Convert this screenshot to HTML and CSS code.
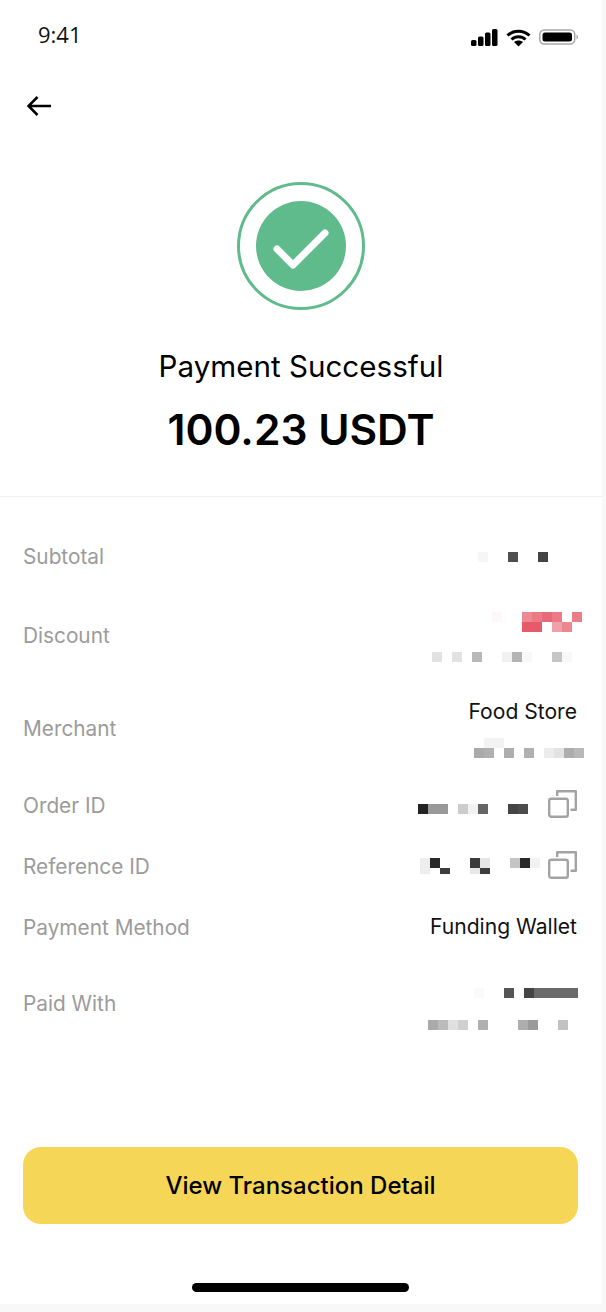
FILE: index.html
```html
<!DOCTYPE html>
<html lang="en">
<head>
  <meta charset="UTF-8">
  <title>Payment Successful</title>
  <meta name="viewport" content="width=device-width, initial-scale=1.0">
  <link rel="stylesheet" href="styles.css">
</head>
<body>
  <div class="screen">
    <div class="status-bar">
      <span class="clock">9:41</span>
      <div class="status-icons">
        <svg width="27" height="17" viewBox="0 0 27 17"><rect x="0" y="11" width="5.500" height="6" rx="1.500"/><rect x="7" y="7.500" width="5.500" height="9.500" rx="1.500"/><rect x="14" y="3.500" width="5.500" height="13.500" rx="1.500"/><rect x="21" y="0" width="5.500" height="17" rx="1.500"/></svg>
        <svg width="25" height="18" viewBox="0 0 25 18"><path d="M1.500 6.500C7.500 .8 17.500 .8 23.500 6.500M5.500 10.500c4-3.700 10-3.700 14 0" fill="none" stroke="#000" stroke-width="3"/><path d="M12.500 17.500l-4.500-4.500c2.700-2 6.300-2 9 0z"/></svg>
        <svg width="39" height="16" viewBox="0 0 39 16"><rect x="0.750" y="1" width="35" height="14" rx="4.500" fill="none" stroke="#a8a8a8" stroke-width="1.500"/><rect x="3.500" y="3.500" width="29.500" height="9" rx="2.500"/><path d="M37.500 5.500c1 .5 1.500 1.500 1.500 2.500s-.5 2-1.500 2.500z" fill="#a8a8a8"/></svg>
      </div>
    </div>

    <div class="nav">
      <svg width="26" height="22" viewBox="0 0 26 22"><path d="M25 11H2.500M11.500 2L2.500 11l9 9" fill="none" stroke="#000" stroke-width="2.500"/></svg>
    </div>

    <div class="result">
      <div class="result-ring">
        <div class="result-disc">
          <svg width="60" height="52" viewBox="0 0 60 52"><path d="M6 29l16 16L54 13" fill="none" stroke="#fff" stroke-width="7" stroke-linecap="round" stroke-linejoin="round"/></svg>
        </div>
      </div>
      <h1 class="result-title">Payment Successful</h1>
      <p class="result-amount">100.23 USDT</p>
    </div>

    <div class="details">
      <div class="row row-subtotal">
        <span class="label">Subtotal</span>
        <div class="value value-single">
          <svg class="mosaic" width="106" height="10" viewBox="478 552 106 10"><rect x="478" y="552" width="10" height="10" fill="#f6f6f6"/><rect x="508" y="552" width="10" height="10" fill="#4f4f4f"/><rect x="538" y="552" width="10" height="10" fill="#444"/></svg>
        </div>
      </div>

      <div class="row row-discount">
        <span class="label">Discount</span>
        <div class="value">
          <svg class="mosaic" width="92" height="20" viewBox="492 612 92 20"><rect x="492" y="612" width="10" height="10" fill="#fdf7f8"/><rect x="522" y="612" width="10" height="10" fill="#ec8a94"/><rect x="532" y="612" width="10" height="10" fill="#ea7b86"/><rect x="542" y="612" width="10" height="10" fill="#e76a7a"/><rect x="552" y="612" width="10" height="10" fill="#eb7a85"/><rect x="572" y="612" width="10" height="10" fill="#ea7d88"/><rect x="522" y="622" width="20" height="10" fill="#e65a69"/><rect x="552" y="622" width="10" height="10" fill="#f0a0aa"/><rect x="562" y="622" width="10" height="10" fill="#ec8790"/></svg>
          <svg class="mosaic" width="152" height="10" viewBox="432 652 152 10"><rect x="432" y="652" width="10" height="10" fill="#e2e2e2"/><rect x="452" y="652" width="10" height="10" fill="#e2e2e2"/><rect x="472" y="652" width="10" height="10" fill="#b8b8b8"/><rect x="502" y="652" width="10" height="10" fill="#f1f1f1"/><rect x="512" y="652" width="10" height="10" fill="#b4b4b4"/><rect x="522" y="652" width="10" height="10" fill="#f8f8f8"/><rect x="552" y="652" width="10" height="10" fill="#c6c6c6"/><rect x="562" y="652" width="10" height="10" fill="#f8f8f8"/></svg>
        </div>
      </div>

      <div class="row row-merchant">
        <span class="label">Merchant</span>
        <div class="value value-tight">
          <span class="text">Food Store</span>
          <svg class="mosaic" width="110" height="20" viewBox="474 738 110 20"><rect x="484" y="738" width="20" height="10" fill="#f3f3f3"/><rect x="474" y="748" width="10" height="10" fill="#aaa"/><rect x="484" y="748" width="10" height="10" fill="#b0b0b0"/><rect x="504" y="748" width="10" height="10" fill="#aeaeae"/><rect x="524" y="748" width="10" height="10" fill="#b0b0b0"/><rect x="544" y="748" width="10" height="10" fill="#ececec"/><rect x="554" y="748" width="10" height="10" fill="#e2e2e2"/><rect x="564" y="748" width="10" height="10" fill="#adadad"/><rect x="574" y="748" width="10" height="10" fill="#b8b8b8"/></svg>
        </div>
      </div>

      <div class="row row-order">
        <span class="label">Order ID</span>
        <div class="value-inline">
          <svg class="id-order" width="110" height="10" viewBox="418 804 110 10"><rect x="418" y="804" width="10" height="10" fill="#222"/><rect x="428" y="804" width="20" height="10" fill="#999"/><rect x="458" y="804" width="10" height="10" fill="#ccc"/><rect x="468" y="804" width="10" height="10" fill="#f2f2f2"/><rect x="478" y="804" width="10" height="10" fill="#666"/><rect x="508" y="804" width="10" height="10" fill="#444"/><rect x="518" y="804" width="10" height="10" fill="#4c4c4c"/></svg>
          <svg class="copy" width="29" height="28" viewBox="0 0 29 28"><rect x="1.200" y="8.700" width="18.600" height="18.100" rx="2" fill="none" stroke="#a3a3a3" stroke-width="2.400"/><path d="M9.200 6V1.200H27.800V19.800H22.500" fill="none" stroke="#a3a3a3" stroke-width="2.400" stroke-linejoin="round"/></svg>
        </div>
      </div>

      <div class="row row-reference">
        <span class="label">Reference ID</span>
        <div class="value-inline value-inline-tight">
          <svg width="120" height="16" viewBox="420 858 120 16"><rect x="420" y="858" width="10" height="16" fill="#eee"/><rect x="430" y="858" width="10" height="10" fill="#2a2a2a"/><rect x="440" y="868" width="10" height="6" fill="#3c3c3c"/><rect x="470" y="858" width="10" height="10" fill="#3c3c3c"/><rect x="480" y="858" width="10" height="10" fill="#e6e6e6"/><rect x="470" y="868" width="10" height="6" fill="#e8e8e8"/><rect x="480" y="868" width="10" height="6" fill="#3c3c3c"/><rect x="510" y="858" width="10" height="10" fill="#c4c4c4"/><rect x="520" y="858" width="10" height="10" fill="#2a2a2a"/><rect x="530" y="858" width="10" height="10" fill="#f2f2f2"/></svg>
          <svg class="copy" width="29" height="28" viewBox="0 0 29 28"><rect x="1.200" y="8.700" width="18.600" height="18.100" rx="2" fill="none" stroke="#a3a3a3" stroke-width="2.400"/><path d="M9.200 6V1.200H27.800V19.800H22.500" fill="none" stroke="#a3a3a3" stroke-width="2.400" stroke-linejoin="round"/></svg>
        </div>
      </div>

      <div class="row row-method">
        <span class="label">Payment Method</span>
        <span class="text">Funding Wallet</span>
      </div>

      <div class="row row-paid">
        <span class="label">Paid With</span>
        <div class="value value-wide">
          <svg class="mosaic" width="110" height="10" viewBox="474 988 110 10"><rect x="474" y="988" width="10" height="10" fill="#fafafa"/><rect x="504" y="988" width="10" height="10" fill="#555"/><rect x="524" y="988" width="10" height="10" fill="#444"/><rect x="534" y="988" width="44" height="10" fill="#6a6a6a"/></svg>
          <svg class="mosaic" width="156" height="10" viewBox="428 1020 156 10"><rect x="428" y="1020" width="10" height="10" fill="#aaa"/><rect x="438" y="1020" width="10" height="10" fill="#bbb"/><rect x="448" y="1020" width="10" height="10" fill="#e0e0e0"/><rect x="458" y="1020" width="10" height="10" fill="#d0d0d0"/><rect x="478" y="1020" width="10" height="10" fill="#b0b0b0"/><rect x="518" y="1020" width="10" height="10" fill="#aeaeae"/><rect x="528" y="1020" width="10" height="10" fill="#9a9a9a"/><rect x="558" y="1020" width="10" height="10" fill="#c2c2c2"/></svg>
        </div>
      </div>
    </div>

    <div class="footer">
      <button class="primary-btn">View Transaction Detail</button>
      <div class="home-bar"></div>
    </div>
  </div>
</body>
</html>
```

FILE: styles.css
```css
* { box-sizing: border-box; }
html, body { margin: 0; height: 100%; }
body { background: #f8f8f8; font-family: "Inter", "Lato", sans-serif; color: #000; }

.screen { width: 602px; height: 1304px; background: #fff; display: flex; flex-direction: column; }

.status-bar { height: 70px; padding: 29px 24px 0 38px; display: flex; justify-content: space-between; align-items: flex-start; }
.clock { font-family: "Open Sans", sans-serif; font-size: 22px; line-height: 12px; margin-top: -1px; color: #111; }
.status-icons { display: flex; align-items: flex-start; gap: 8px; }

.nav { height: 112px; padding: 25px 0 0 26px; }
.nav svg { display: block; }

.result { height: 315px; display: flex; flex-direction: column; align-items: center; border-bottom: 1px solid #f1f1f1; }
.result-ring { width: 128px; height: 128px; border: 3px solid #5fbb8c; border-radius: 50%; display: flex; align-items: center; justify-content: center; }
.result-disc { width: 90px; height: 90px; border-radius: 50%; background: #5fbb8c; display: flex; align-items: center; justify-content: center; }
.result-title { font-size: 29.600px; font-weight: 400; margin: 38px 0 0; line-height: 36px; }
.result-amount { font-size: 42.500px; font-weight: 600; margin: 21px 0 0; line-height: 50px; }

.details { padding: 0 25px 0 23px; }
.row { display: flex; justify-content: space-between; align-items: center; }
.row-subtotal { margin-top: 29px; height: 60px; }
.row-discount { height: 98px; }
.row-merchant { height: 88px; }
.row-order { height: 66px; }
.row-reference { height: 56px; }
.row-method { height: 66px; }
.row-paid { height: 86px; }

.label { font-size: 20.800px; color: #9b9b9b; }
.text { font-size: 21.100px; line-height: 26px; color: #111; }

.value { display: flex; flex-direction: column; align-items: flex-end; gap: 20px; padding-top: 4px; }
.value-single { padding-top: 2px; }
.value-tight { gap: 13px; padding-top: 1px; }
.value-wide { gap: 22px; padding-top: 12px; }
.value-inline { display: flex; align-items: center; gap: 20px; }
.value-inline-tight { gap: 8px; }
.id-order { margin-top: 8px; }
.mosaic { display: block; margin-right: -7px; }
.copy { display: block; margin-bottom: 2px; }

.footer { margin-top: auto; padding: 0 24px 12px 23px; display: flex; flex-direction: column; align-items: center; }
.primary-btn { width: 100%; height: 77px; border: none; border-radius: 18px; background: #f6d656; font: inherit; font-size: 24px; font-weight: 500; color: #000; }
.home-bar { width: 217px; height: 9px; margin-top: 59px; background: #000; border-radius: 5px; }
```
